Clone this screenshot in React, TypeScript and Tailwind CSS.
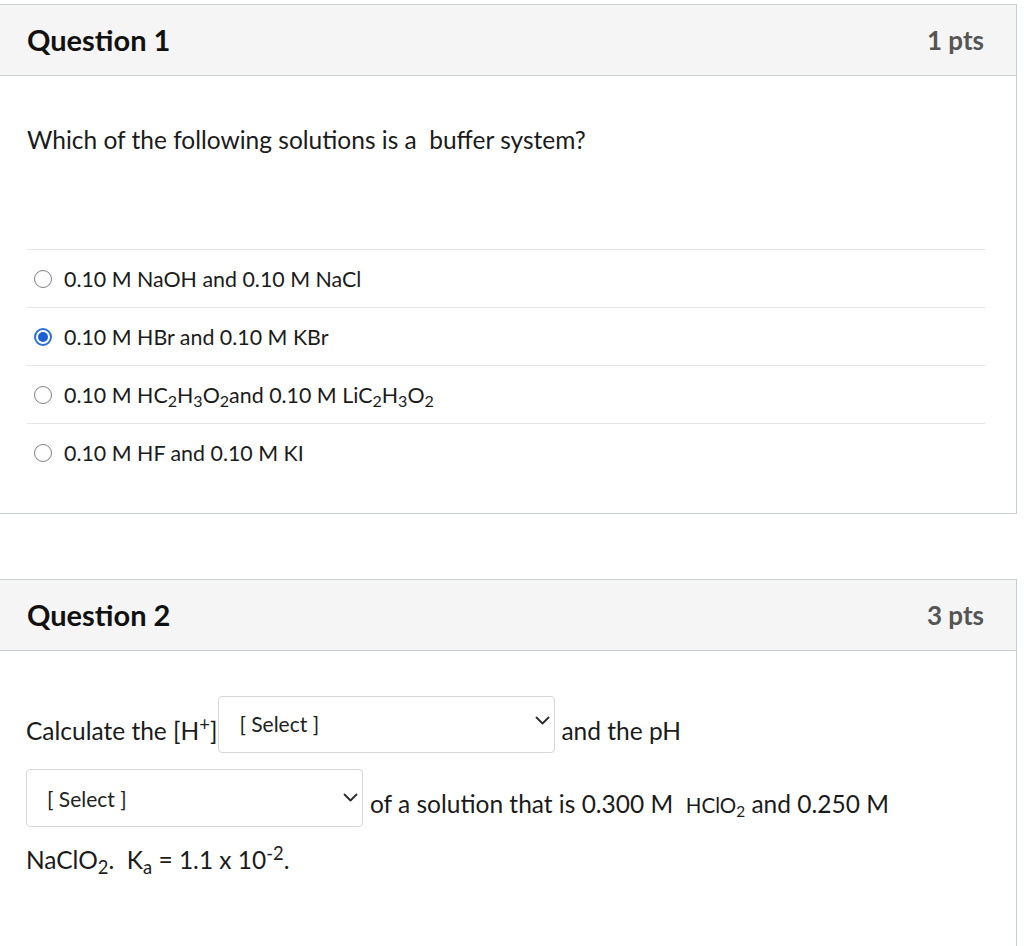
const answers = [
  { id: 1, label: <>0.10 M NaOH and 0.10 M NaCl</>, checked: false },
  { id: 2, label: <>0.10 M HBr and 0.10 M KBr</>, checked: true },
  {
    id: 3,
    label: (
      <>
        0.10 M HC<sub>2</sub>H<sub>3</sub>O<sub>2</sub>and 0.10 M LiC<sub>2</sub>H<sub>3</sub>O<sub>2</sub>
      </>
    ),
    checked: false,
  },
  { id: 4, label: <>0.10 M HF and 0.10 M KI</>, checked: false },
];

function Radio({ checked }: { checked: boolean }) {
  if (checked) {
    return (
      <span className="flex h-[18px] w-[18px] items-center justify-center rounded-full border-2 border-[#2a6fdb] bg-white">
        <span className="h-[10px] w-[10px] rounded-full bg-[#1d5fd6]" />
      </span>
    );
  }
  return <span className="h-[18px] w-[18px] rounded-full border-[1.5px] border-[#808080] bg-white" />;
}

function QuestionHeader({ title, pts }: { title: string; pts: string }) {
  return (
    <div className="flex h-[71px] items-center justify-between border-b border-[#c7cdd1] bg-[#f5f5f5] pl-[27px] pr-[32px]">
      <h2 className="text-[29px] font-bold text-[#111]">{title}</h2>
      <span className="text-[26px] font-bold text-[#555]">{pts}</span>
    </div>
  );
}

function Chevron({ className }: { className: string }) {
  return (
    <svg className={`absolute ${className}`} width="15" height="9" viewBox="0 0 15 9" fill="none">
      <polyline points="1.5,1.5 7.5,7.5 13.5,1.5" stroke="#2b2b2b" strokeWidth="1.8" strokeLinecap="round" strokeLinejoin="round" />
    </svg>
  );
}

function SelectBox({ height, textTop, chevronTop }: { height: string; textTop: string; chevronTop: string }) {
  return (
    <div className={`relative w-[337px] shrink-0 rounded-[4px] border border-[#d7d7d7] bg-white ${height}`}>
      <span className={`absolute left-[20px] text-[21px] leading-[28px] text-[#222] ${textTop}`}>[ Select ]</span>
      <Chevron className={`right-[4px] ${chevronTop}`} />
    </div>
  );
}

export default function App() {
  return (
    <div className="min-h-[946px] bg-white pt-[4px] text-[#1b1b1b]" style={{ fontFamily: "Lato, 'Open Sans', sans-serif" }}>
      {/* Question 1 */}
      <section className="w-[1017px] border-y border-r border-[#c7cdd1]">
        <QuestionHeader title="Question 1" pts="1 pts" />
        <div className="pl-[27px] pr-[31px] pb-[32px]">
          <p className="mt-[49px] text-[24.5px] leading-[30px]">Which of the following solutions is a&nbsp; buffer system?</p>
          <div className="mt-[94px]">
            {answers.map((a) => (
              <div key={a.id} className="flex h-[58px] items-center border-t border-[#e6e6e6]">
                <div className="flex w-[37px] justify-end pr-[12px]">
                  <Radio checked={a.checked} />
                </div>
                <span className="text-[21.4px] leading-[28px]">{a.label}</span>
              </div>
            ))}
          </div>
        </div>
      </section>

      {/* Question 2 */}
      <section className="mt-[65px] h-[400px] w-[1017px] border-t border-r border-[#c7cdd1]">
        <QuestionHeader title="Question 2" pts="3 pts" />
        <div className="pl-[26px]">
          <div className="mt-[45px] flex items-start">
            <span className="mt-[20px] text-[24.5px] leading-[30px]">
              Calculate the [H<sup>+</sup>]
            </span>
            <div className="ml-[1px]">
              <SelectBox height="h-[57px]" textTop="top-[13px]" chevronTop="top-[19px]" />
            </div>
            <span className="ml-[6px] mt-[20px] text-[24.5px] leading-[30px]">and the pH</span>
          </div>
          <div className="mt-[16px] flex items-start">
            <SelectBox height="h-[58px]" textTop="top-[15px]" chevronTop="top-[23px]" />
            <span className="ml-[7px] mt-[20px] text-[24.5px] leading-[30px]">
              of a solution that is 0.300 M&nbsp; <span className="text-[20.5px]">HClO<sub>2</sub></span> and 0.250 M
            </span>
          </div>
          <p className="mt-[18px] text-[24.5px] leading-[30px]">
            NaClO<sub>2</sub>.&nbsp; K<sub>a</sub> = 1.1 x 10<sup>-2</sup>.
          </p>
        </div>
      </section>
    </div>
  );
}
